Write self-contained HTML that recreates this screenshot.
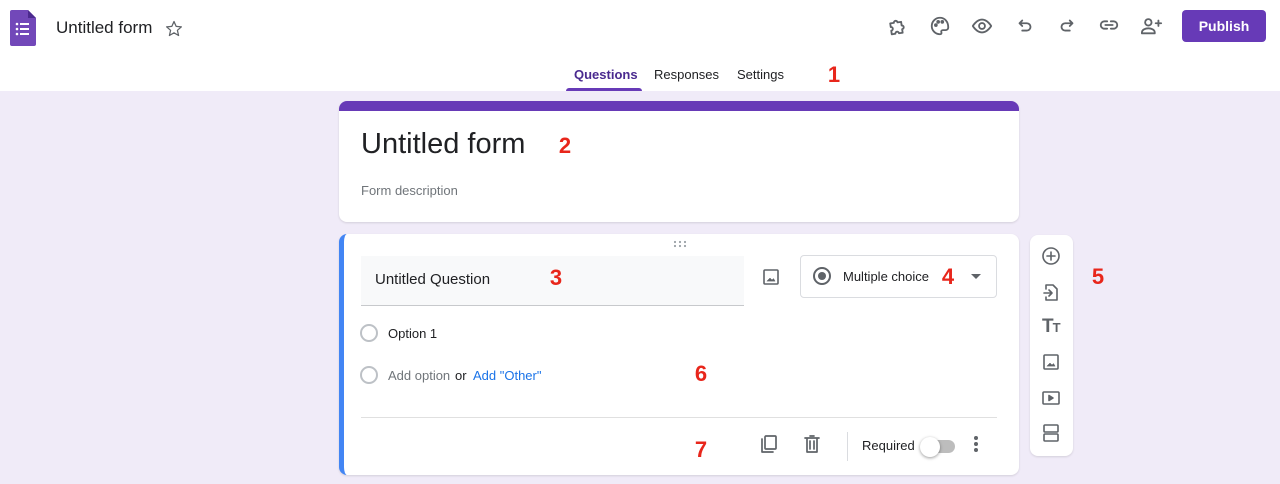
<!DOCTYPE html><html><head><meta charset="utf-8"><style>
*{box-sizing:border-box;margin:0;padding:0}
body{width:1280px;height:484px;overflow:hidden;background:#f0ebf8;font-family:"Liberation Sans",Arial,sans-serif;position:relative;color:#202124}
.a{position:absolute}
.hdr{left:0;top:0;width:1280px;height:91px;background:#fff}
.red{position:absolute;color:#e8261b;font-weight:bold;font-size:22px;transform:translate(-50%,-50%)}
svg.i{position:absolute;fill:none;stroke:#5f6368;stroke-width:2;stroke-linecap:round;stroke-linejoin:round}
.card{background:#fff;border-radius:8px;box-shadow:0 1px 2px rgba(0,0,0,.12)}
.circ{position:absolute;width:18px;height:18px;border:2px solid #bdc1c6;border-radius:50%}
</style></head><body>
<div class="a hdr"></div>
<svg class="a" style="left:10px;top:10px" width="26" height="36" viewBox="0 0 26 36"><path d="M2 0h16l8 8v26a2 2 0 0 1-2 2H2a2 2 0 0 1-2-2V2a2 2 0 0 1 2-2z" fill="#7248b9"/><path d="M18 0l8 8h-8z" fill="#4c2a8f"/><g fill="#fff"><circle cx="7" cy="14" r="1.3"/><circle cx="7" cy="19" r="1.3"/><circle cx="7" cy="24" r="1.3"/><rect x="10" y="13" width="9" height="2"/><rect x="10" y="18" width="9" height="2"/><rect x="10" y="23" width="9" height="2"/></g></svg>
<div class="a" style="left:56px;top:18px;font-size:17px">Untitled form</div>
<svg class="i" style="left:164px;top:19px;stroke-width:1.5" width="20" height="20" viewBox="0 0 24 24"><path d="M12 3l2.6 5.8 6.3.6-4.8 4.2 1.4 6.2L12 16.6 6.5 19.8l1.4-6.2-4.8-4.2 6.3-.6z"/></svg>
<svg class="i" style="left:887px;top:15px" width="22" height="22" viewBox="0 0 24 24"><path d="M4 8h4a2 2 0 1 1 4 0h4v4a2 2 0 1 1 0 4v4h-4a2 2 0 1 0-4 0H4v-4a2 2 0 1 0 0-4z" transform="rotate(-8 12 12)"/></svg>
<svg class="i" style="left:929px;top:15px" width="22" height="22" viewBox="0 0 24 24"><path d="M12 3a9 9 0 0 0 0 18c1.5 0 2-1 1.5-2s0-2.5 1.5-2.5H18a3 3 0 0 0 3-3C21 7 17 3 12 3z"/><circle cx="7.5" cy="11" r="1" fill="#5f6368"/><circle cx="10" cy="7.5" r="1" fill="#5f6368"/><circle cx="14.5" cy="7.5" r="1" fill="#5f6368"/></svg>
<svg class="i" style="left:971px;top:15px" width="22" height="22" viewBox="0 0 24 24"><path d="M2 12s4-7 10-7 10 7 10 7-4 7-10 7S2 12 2 12z"/><circle cx="12" cy="12" r="3.2"/></svg>
<svg class="i" style="left:1014px;top:15px" width="22" height="22" viewBox="0 0 24 24"><path d="M9 6L6 9l3 3M6 9h8a4 4 0 0 1 0 8h-5"/></svg>
<svg class="i" style="left:1056px;top:15px" width="22" height="22" viewBox="0 0 24 24"><path d="M15 6l3 3-3 3M18 9h-8a4 4 0 0 0 0 8h5"/></svg>
<svg class="i" style="left:1098px;top:14px" width="22" height="22" viewBox="0 0 24 24"><path d="M10 8H7a4 4 0 0 0 0 8h3M14 8h3a4 4 0 0 1 0 8h-3M8 12h8"/></svg>
<svg class="i" style="left:1140px;top:15px" width="24" height="22" viewBox="0 0 26 24"><circle cx="9" cy="8" r="3.5"/><path d="M2 20v-1c0-3 4-4.5 7-4.5s7 1.5 7 4.5v1zM20 6v6M17 9h6"/></svg>
<div class="a" style="left:1182px;top:10px;width:84px;height:32px;background:#673ab7;border-radius:4px;color:#fff;font-size:14px;font-weight:bold;text-align:center;line-height:32px">Publish</div>
<div class="a" style="left:574px;top:67px;font-size:13px;color:#4a2a8f;font-weight:bold">Questions</div>
<div class="a" style="left:566px;top:88px;width:76px;height:3px;background:#673ab7;border-radius:3px 3px 0 0"></div>
<div class="a" style="left:654px;top:67px;font-size:13px">Responses</div>
<div class="a" style="left:737px;top:67px;font-size:13px">Settings</div>
<div class="red" style="left:834px;top:75px">1</div>

<div class="a card" style="left:339px;top:101px;width:680px;height:121px;overflow:hidden"><div style="height:10px;background:#673ab7"></div></div>
<div class="a" style="left:361px;top:128px;font-size:29px">Untitled form</div>
<div class="a" style="left:361px;top:183px;font-size:13px;color:#70757a">Form description</div>
<div class="red" style="left:565px;top:146px">2</div>

<div class="a card" style="left:339px;top:234px;width:680px;height:241px;border-left:5px solid #4285f4"></div>
<svg class="a" style="left:673px;top:240px" width="14" height="8" viewBox="0 0 14 8"><g fill="#9aa0a6"><circle cx="2" cy="2" r="1.1"/><circle cx="7" cy="2" r="1.1"/><circle cx="12" cy="2" r="1.1"/><circle cx="2" cy="6" r="1.1"/><circle cx="7" cy="6" r="1.1"/><circle cx="12" cy="6" r="1.1"/></g></svg>
<div class="a" style="left:361px;top:256px;width:383px;height:50px;background:#f8f9fa;border-bottom:1px solid #c7c9cc"></div>
<div class="a" style="left:375px;top:271px;font-size:15px">Untitled Question</div>
<div class="red" style="left:556px;top:278px">3</div>
<svg class="i" style="left:762px;top:268px;stroke-width:1.6" width="18" height="18" viewBox="0 0 18 18"><rect x="2" y="2" width="14" height="14" rx="1"/><path d="M5 13l3-3 2 2 1.5-1.5L13 13z" fill="#5f6368" stroke-width="0.5"/></svg>
<div class="a" style="left:800px;top:255px;width:197px;height:43px;border:1px solid #dadce0;border-radius:4px"></div>
<div class="a" style="left:813px;top:267px;width:18px;height:18px;border:2px solid #5f6368;border-radius:50%"></div>
<div class="a" style="left:818px;top:272px;width:8px;height:8px;background:#5f6368;border-radius:50%"></div>
<div class="a" style="left:843px;top:269px;font-size:13px">Multiple choice</div>
<div class="red" style="left:948px;top:277px">4</div>
<div class="a" style="left:971px;top:274px;border-left:5px solid transparent;border-right:5px solid transparent;border-top:5px solid #5f6368"></div>
<div class="circ" style="left:360px;top:324px"></div>
<div class="a" style="left:388px;top:326px;font-size:13px">Option 1</div>
<div class="circ" style="left:360px;top:366px"></div>
<div class="a" style="left:388px;top:368px;font-size:13px;color:#70757a">Add option</div>
<div class="a" style="left:455px;top:368px;font-size:13px">or</div>
<div class="a" style="left:473px;top:368px;font-size:13px;color:#1a73e8">Add "Other"</div>
<div class="red" style="left:701px;top:374px">6</div>
<div class="a" style="left:361px;top:417px;width:636px;height:1px;background:#e0e0e0"></div>
<div class="red" style="left:701px;top:450px">7</div>
<svg class="i" style="left:759px;top:434px;stroke-width:1.7" width="20" height="20" viewBox="0 0 20 20"><rect x="6" y="2" width="11" height="13" rx="1"/><path d="M3 5v13h11"/></svg>
<svg class="i" style="left:802px;top:434px;stroke-width:1.7" width="20" height="20" viewBox="0 0 20 20"><path d="M3 4h14M8 2h4M5 4v14h10V4M8 7v8M12 7v8"/></svg>
<div class="a" style="left:847px;top:432px;width:1px;height:29px;background:#dadce0"></div>
<div class="a" style="left:862px;top:438px;font-size:13px">Required</div>
<div class="a" style="left:925px;top:440px;width:30px;height:13px;background:#bdbdbd;border-radius:7px"></div>
<div class="a" style="left:920px;top:437px;width:20px;height:20px;background:#fff;border-radius:50%;box-shadow:0 1px 3px rgba(0,0,0,.4)"></div>
<div class="a" style="left:974px;top:436px;width:4px;height:4px;background:#5f6368;border-radius:50%;box-shadow:0 6px 0 #5f6368,0 12px 0 #5f6368"></div>

<div class="a card" style="left:1030px;top:235px;width:43px;height:221px"></div>
<svg class="i" style="left:1041px;top:246px;stroke-width:1.6" width="20" height="20" viewBox="0 0 20 20"><circle cx="10" cy="10" r="8"/><path d="M10 6v8M6 10h8"/></svg>
<svg class="i" style="left:1041px;top:282px;stroke-width:1.6" width="20" height="20" viewBox="0 0 20 20"><path d="M5 7V3h7l4 4v11H5v-3M3 11h8M8 8l3 3-3 3"/></svg>
<div class="a" style="left:1042px;top:316px;font-size:19px;font-weight:bold;color:#5f6368;letter-spacing:-1px">T<span style="font-size:13px">T</span></div>
<svg class="i" style="left:1042px;top:353px;stroke-width:1.6" width="18" height="18" viewBox="0 0 18 18"><rect x="2" y="2" width="14" height="14" rx="1"/><path d="M5 13l3-3 2 2 1.5-1.5L13 13z" fill="#5f6368" stroke-width="0.5"/></svg>
<svg class="i" style="left:1041px;top:388px;stroke-width:1.6" width="20" height="20" viewBox="0 0 20 20"><rect x="2" y="4" width="16" height="12" rx="1"/><path d="M8 7.5v5l4-2.5z" fill="#5f6368"/></svg>
<svg class="i" style="left:1041px;top:423px;stroke-width:1.6" width="20" height="20" viewBox="0 0 20 20"><rect x="3" y="2" width="14" height="7" rx="1"/><rect x="3" y="11" width="14" height="7" rx="1"/></svg>
<div class="red" style="left:1098px;top:277px">5</div>
</body></html>
